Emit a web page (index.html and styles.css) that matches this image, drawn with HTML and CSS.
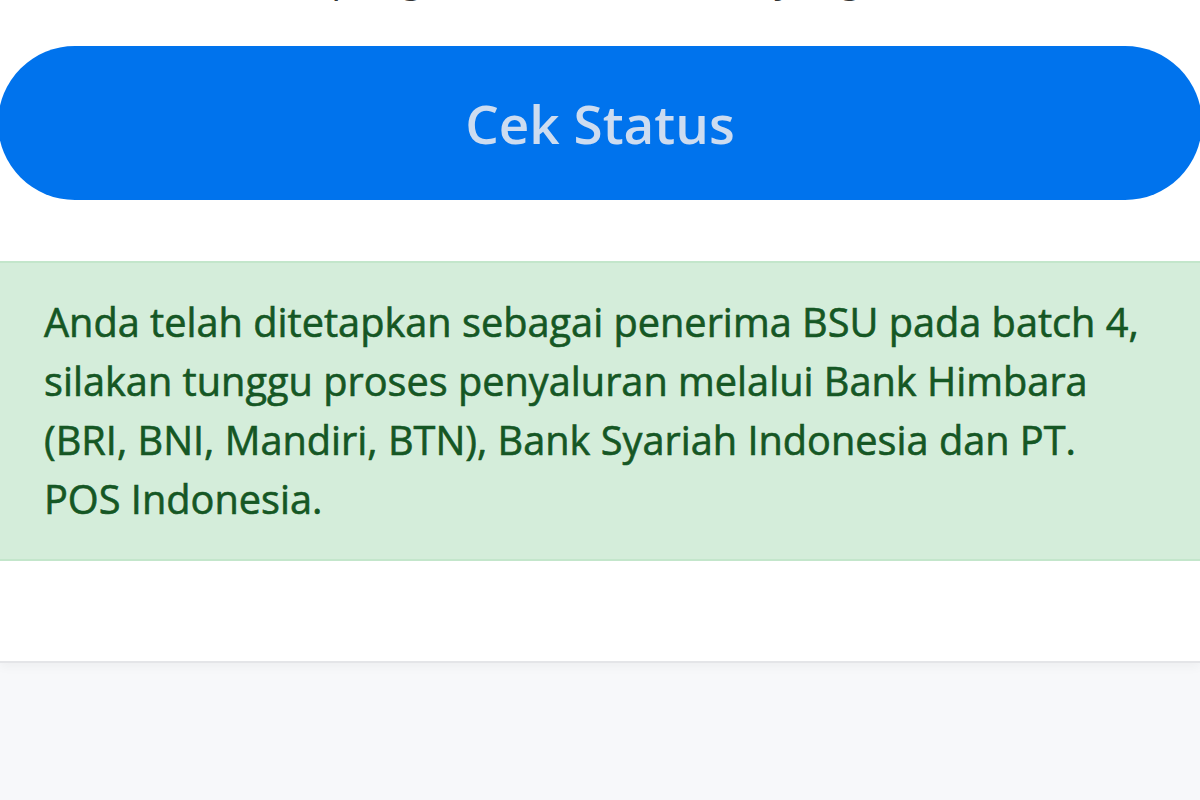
FILE: index.html
```html
<!DOCTYPE html>
<html lang="id">
  <head>
    <meta charset="UTF-8" />
    <meta name="viewport" content="width=device-width, initial-scale=1.0" />
    <title>Cek Status BSU</title>
    <link rel="stylesheet" href="styles.css">
  </head>
  <body>
    <div class="card">
      <p class="hint">Masukkan data pengecekan sesuai KTP, yang</p>
      <button class="btn-cek">Cek Status</button>
      <div class="alert-success">
        Anda telah ditetapkan sebagai penerima BSU pada batch 4, silakan tunggu proses penyaluran melalui Bank Himbara (BRI, BNI, Mandiri, BTN), Bank Syariah Indonesia dan PT. POS Indonesia.
      </div>
    </div>
    <div class="footer-area"></div>
  </body>
</html>
```

FILE: styles.css
```css
* {
  padding: 0;
  margin: 0;
  box-sizing: border-box;
}
body {
  font-family: "Open Sans", "Noto Sans", sans-serif;
  background-color: #f7f8fa;
  overflow: hidden;
}
.card {
  background-color: #fff;
  padding-bottom: 100px;
  border-bottom: 2px solid #e4e5e8;
  box-shadow: 0 4px 10px rgba(0, 0, 0, 0.04);
}
.hint {
  font-size: 39px;
  line-height: 58px;
  color: #333;
  padding-left: 44px;
  margin-top: -52px;
}
.btn-cek {
  display: block;
  width: 1204px;
  margin-left: -2px;
  margin-top: 40px;
  height: 154px;
  border: none;
  border-radius: 77px;
  background-color: #0073ed;
  color: #cddcf0;
  font-family: "Open Sans", "Noto Sans", sans-serif;
  font-size: 53px;
  font-weight: 600;
  cursor: pointer;
}
.alert-success {
  margin-top: 61px;
  background-color: #d4edda;
  border-top: 2px solid #c3e6cb;
  border-bottom: 2px solid #c3e6cb;
  color: #155724;
  font-size: 39.7px;
  line-height: 59px;
  -webkit-text-stroke: 0.6px #155724;
  padding: 30px 50px 30px 44px;
}
.footer-area {
  height: 200px;
}
```
